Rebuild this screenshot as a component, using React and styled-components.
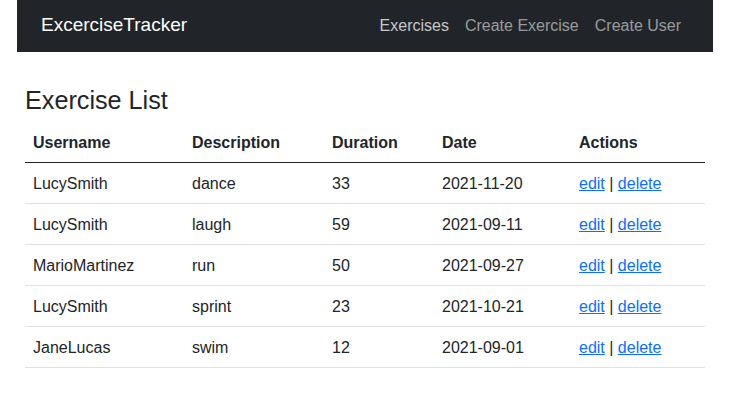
import React from "react";
import styled, { createGlobalStyle } from "styled-components";

const GlobalStyle = createGlobalStyle`
  body {
    margin: 0;
    font-family: "Liberation Sans", Arial, sans-serif;
    font-size: 16px;
    line-height: 1.5;
    color: #212529;
    background: #fff;
  }
`;

const exercises = [
  { username: "LucySmith", description: "dance", duration: 33, date: "2021-11-20" },
  { username: "LucySmith", description: "laugh", duration: 59, date: "2021-09-11" },
  { username: "MarioMartinez", description: "run", duration: 50, date: "2021-09-27" },
  { username: "LucySmith", description: "sprint", duration: 23, date: "2021-10-21" },
  { username: "JaneLucas", description: "swim", duration: 12, date: "2021-09-01" },
];

const columns = [
  { title: "Username", width: 159 },
  { title: "Description", width: 140 },
  { title: "Duration", width: 110 },
  { title: "Date", width: 137 },
  { title: "Actions", width: 134 },
];

function App() {
  return (
    <Container>
      <GlobalStyle />
      <Navbar>
        <Brand href="#">ExcerciseTracker</Brand>
        <NavList>
          <NavLink href="#" active>Exercises</NavLink>
          <NavLink href="#">Create Exercise</NavLink>
          <NavLink href="#">Create User</NavLink>
        </NavList>
      </Navbar>
      <Content>
        <Heading>Exercise List</Heading>
        <Table>
          <colgroup>
            {columns.map((c) => (
              <col key={c.title} style={{ width: c.width }} />
            ))}
          </colgroup>
          <thead>
            <tr>
              {columns.map((c) => (
                <Th key={c.title}>{c.title}</Th>
              ))}
            </tr>
          </thead>
          <tbody>
            {exercises.map((ex, i) => (
              <tr key={i}>
                <Td>{ex.username}</Td>
                <Td>{ex.description}</Td>
                <Td>{ex.duration}</Td>
                <Td>{ex.date}</Td>
                <Td>
                  <ActionLink href="#">edit</ActionLink> | <ActionLink href="#">delete</ActionLink>
                </Td>
              </tr>
            ))}
          </tbody>
        </Table>
      </Content>
    </Container>
  );
}

const Container = styled.div`
  padding: 0 21px 0 17px;
`;

const Navbar = styled.nav`
  background-color: #212529;
  height: 52px;
  display: flex;
  align-items: center;
  justify-content: space-between;
  padding: 0 24px;
`;

const Brand = styled.a`
  color: #fff;
  font-size: 19px;
  text-decoration: none;
  margin-top: -1px;
`;

const NavList = styled.div`
  display: flex;
  align-items: center;
  margin-top: -1px;
`;

const NavLink = styled.a`
  padding: 0 8px;
  font-size: 16px;
  text-decoration: none;
  color: ${(p) => (p.active ? "rgba(255, 255, 255, 0.75)" : "rgba(255, 255, 255, 0.55)")};
`;

const Content = styled.div`
  padding: 32px 8px 0;
`;

const Heading = styled.h3`
  margin: 0 0 7px;
  padding-top: 1px;
  font-size: 25.2px;
  font-weight: 500;
  line-height: 1.2;
`;

const Table = styled.table`
  width: 680px;
  border-collapse: collapse;
  table-layout: fixed;
`;

const Th = styled.th`
  text-align: left;
  font-weight: 700;
  padding: 9px 8px 7px;
  border-bottom: 1px solid #212529;
`;

const Td = styled.td`
  padding: 9px 8px 7px;
  border-bottom: 1px solid #dee2e6;
`;

const ActionLink = styled.a`
  color: #0d6efd;
  text-decoration: underline;
`;

export default App;
